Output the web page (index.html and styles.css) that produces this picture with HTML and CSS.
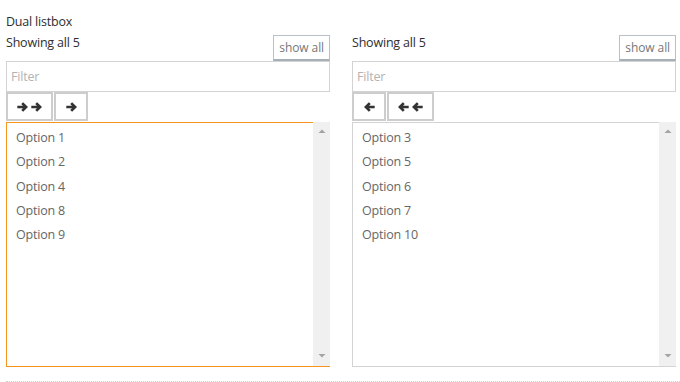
FILE: index.html
```html
<!DOCTYPE html>
<html>
<head>
<meta charset="utf-8">
<link rel="stylesheet" href="styles.css">
</head>
<body>
<div class="page">
  <div class="title">Dual listbox</div>
  <div class="columns">
    <div class="col">
      <div class="head">
        <span class="count">Showing all 5</span>
        <button class="showall">show all</button>
      </div>
      <input class="filter" type="text" placeholder="Filter">
      <div class="moves">
        <button class="mv wide"><svg width="11" height="10" viewBox="0 0 11 10"><path d="M0.3 5H9M5.2 1.1L9.1 5L5.2 8.9" class="ar"/></svg><svg width="11" height="10" viewBox="0 0 11 10"><path d="M0.3 5H9M5.2 1.1L9.1 5L5.2 8.9" class="ar"/></svg></button>
        <button class="mv narrow"><svg width="11" height="10" viewBox="0 0 11 10"><path d="M0.3 5H9M5.2 1.1L9.1 5L5.2 8.9" class="ar"/></svg></button>
      </div>
      <div class="list focus">
        <ul class="opts">
          <li>Option 1</li>
          <li>Option 2</li>
          <li>Option 4</li>
          <li>Option 8</li>
          <li>Option 9</li>
        </ul>
        <div class="scroll">
          <svg class="tri up" width="8" height="4" viewBox="0 0 8 4"><path d="M0.5 4L4 0.5L7.5 4Z"/></svg>
          <svg class="tri down" width="8" height="4" viewBox="0 0 8 4"><path d="M0.5 0L4 3.5L7.5 0Z"/></svg>
        </div>
      </div>
    </div>
    <div class="col">
      <div class="head">
        <span class="count">Showing all 5</span>
        <button class="showall">show all</button>
      </div>
      <input class="filter" type="text" placeholder="Filter">
      <div class="moves">
        <button class="mv narrow"><svg width="11" height="10" viewBox="0 0 11 10"><path d="M10.7 5H2M5.8 1.1L1.9 5L5.8 8.9" class="ar"/></svg></button>
        <button class="mv wide"><svg width="11" height="10" viewBox="0 0 11 10"><path d="M10.7 5H2M5.8 1.1L1.9 5L5.8 8.9" class="ar"/></svg><svg width="11" height="10" viewBox="0 0 11 10"><path d="M10.7 5H2M5.8 1.1L1.9 5L5.8 8.9" class="ar"/></svg></button>
      </div>
      <div class="list">
        <ul class="opts">
          <li>Option 3</li>
          <li>Option 5</li>
          <li>Option 6</li>
          <li>Option 7</li>
          <li>Option 10</li>
        </ul>
        <div class="scroll">
          <svg class="tri up" width="8" height="4" viewBox="0 0 8 4"><path d="M0.5 4L4 0.5L7.5 4Z"/></svg>
          <svg class="tri down" width="8" height="4" viewBox="0 0 8 4"><path d="M0.5 0L4 3.5L7.5 0Z"/></svg>
        </div>
      </div>
    </div>
  </div>
  <div class="rule"></div>
</div>
</body>
</html>
```

FILE: styles.css
```css
html, body {
  margin: 0;
  padding: 0;
  background: #fff;
}
body {
  font-family: "Open Sans", "Noto Sans", sans-serif;
  font-size: 12.5px;
  letter-spacing: -0.2px;
  color: #2e2e2e;
}
.page {
  padding: 13px 0 0 6px;
  width: 674px;
}
.title {
  line-height: 18px;
  height: 18px;
  margin-bottom: 4px;
}
.columns {
  display: flex;
  gap: 22px;
}
.col {
  width: 324px;
}
.head {
  display: flex;
  justify-content: space-between;
  align-items: flex-start;
  height: 26px;
}
.count {
  line-height: 18px;
  margin-top: -1px;
}
.showall {
  box-sizing: border-box;
  height: 26px;
  margin: 0;
  padding: 0 5px;
  background: #fff;
  border: 1px solid #b9c0c7;
  border-bottom: 2px solid #a7afb7;
  font-family: "Open Sans", "Noto Sans", sans-serif;
  font-size: 12px;
  letter-spacing: -0.1px;
  color: #777;
  line-height: 22px;
}
.filter {
  display: block;
  box-sizing: border-box;
  width: 324px;
  height: 31px;
  margin: 0;
  padding: 0 4px;
  border: 1px solid #d3d3d3;
  font-family: "Open Sans", "Noto Sans", sans-serif;
  font-size: 12.5px;
  letter-spacing: -0.2px;
  color: #555;
  outline: none;
}
.filter::placeholder {
  color: #b3b3b3;
}
.moves {
  display: flex;
  gap: 1px;
  height: 29px;
}
.mv {
  box-sizing: border-box;
  height: 29px;
  margin: 0;
  padding: 0;
  background: #fff;
  border: 2px solid #cdcdcd;
  display: flex;
  align-items: center;
  justify-content: center;
  gap: 3px;
}
.mv.wide {
  width: 47px;
}
.mv.narrow {
  width: 34px;
}
.ar {
  fill: none;
  stroke: #333;
  stroke-width: 2.7;
}
.list {
  position: relative;
  box-sizing: border-box;
  margin-top: 1px;
  height: 245px;
  border: 1px solid #d3d3d3;
}
.list.focus {
  border-color: #f7941d;
}
.opts {
  list-style: none;
  margin: 0;
  padding: 3px 0 0 9px;
  font-size: 12.5px;
  line-height: 24.25px;
  color: #666;
}
.scroll {
  position: absolute;
  top: -1px;
  right: -1px;
  bottom: 0;
  width: 17px;
  background: #f0f0f0;
}
.tri {
  position: absolute;
  left: 5px;
  fill: #a3a3a3;
}
.tri.up {
  top: 7px;
}
.tri.down {
  bottom: 8px;
}
.rule {
  margin-top: 14px;
  border-top: 1px dotted #cfcfcf;
  margin-right: -6px;
}
```
